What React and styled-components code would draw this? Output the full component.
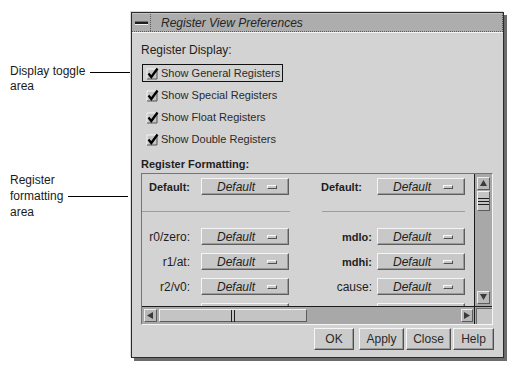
import styled, { createGlobalStyle } from "styled-components";

const GlobalStyle = createGlobalStyle`
  body {
    margin: 0;
    background: #ffffff;
    font-family: "Liberation Sans", Arial, sans-serif;
    font-size: 12px;
    color: #1a1a1a;
  }
`;

const Page = styled.div`
  display: flex;
  width: 517px;
  height: 371px;
  overflow: hidden;
`;

const Notes = styled.div`
  width: 121px;
  padding-left: 10px;
  flex-shrink: 0;
`;

const Note = styled.div`
  margin-top: ${(p) => p.$gap}px;
  line-height: ${(p) => p.$lh}px;
`;

const NoteLine = styled.div`
  display: flex;
  align-items: center;
  white-space: nowrap;
`;

const Leader = styled.span`
  flex: 1;
  height: 1px;
  background: #000;
  margin: 1px ${(p) => p.$end}px 0 5px;
`;

const Window = styled.div`
  margin-top: 12px;
  width: 373px;
  height: 346px;
  box-sizing: border-box;
  border: 1px solid #2b2b2b;
  background: #d3d3d3;
  box-shadow: -1px -1px 0 #dcdcdc, 3px 3px 0 #6c6c6c;
  display: flex;
  flex-direction: column;
  flex-shrink: 0;
`;

const TitleBar = styled.div`
  display: flex;
  align-items: center;
  height: 17px;
  background: #adadad;
  border-bottom: 1px dotted #5a5a5a;
  border-right: 1px dotted #5a5a5a;
  border-top: 1px solid #c4c4c4;
`;

const MenuButton = styled.div`
  width: 18px;
  height: 17px;
  border-right: 1px dotted #5a5a5a;
  display: flex;
  align-items: center;
  justify-content: center;
  span {
    width: 13px;
    height: 2px;
    background: #1e1e1e;
    border-bottom: 1px solid #f2f2f2;
    border-top: 1px solid #6e6e6e;
  }
`;

const Title = styled.div`
  margin-left: 10px;
  font-style: italic;
  color: #262626;
`;

const Body = styled.div`
  flex: 1;
  border-top: 1px solid #f4f4f4;
  padding: 0 9px;
  display: flex;
  flex-direction: column;
`;

const Heading = styled.div`
  line-height: 14px;
  margin-top: ${(p) => p.$gap}px;
  font-size: ${(p) => (p.$bold ? 11 : 12)}px;
  font-weight: ${(p) => (p.$bold ? 700 : 400)};
  color: #1e1e1e;
`;

const CheckList = styled.div`
  margin-top: 5px;
  display: flex;
  flex-direction: column;
`;

const CheckRow = styled.div`
  height: 22px;
  display: flex;
  align-items: center;
`;

const Focus = styled.div`
  display: flex;
  align-items: center;
  height: 16px;
  margin-left: 1px;
  padding: 0 2px 0 3px;
  border: 1px solid ${(p) => (p.$on ? "#111" : "transparent")};
  gap: 2px;
  font-size: 11px;
  color: #2a2a2a;
`;

const CheckMark = () => (
  <svg width="13" height="13" viewBox="0 0 13 13">
    <rect x="1" y="2" width="10" height="10" fill="#c4c4c4" />
    <path d="M1 12 V2 H11" stroke="#f4f4f4" strokeWidth="1" fill="none" />
    <path d="M1 12 H11 V2" stroke="#555" strokeWidth="1" fill="none" />
    <path d="M2.5 6.5 L5.3 10 L11.5 1.5" stroke="#000" strokeWidth="2.3" fill="none" />
  </svg>
);

const ScrollFrame = styled.div`
  margin-top: 2px;
  width: 352px;
  height: 152px;
  box-sizing: border-box;
  border: 1px solid;
  border-color: #747474 #f6f6f6 #f6f6f6 #747474;
  display: grid;
  grid-template-columns: 332px 18px;
  grid-template-rows: 132px 18px;
`;

const Viewport = styled.div`
  overflow: hidden;
  display: flex;
  flex-direction: column;
`;

const FieldRow = styled.div`
  height: 25px;
  flex-shrink: 0;
  display: flex;
  align-items: center;
`;

const FieldLabel = styled.div`
  width: ${(p) => p.$w}px;
  box-sizing: border-box;
  padding-right: ${(p) => p.$pad}px;
  text-align: right;
  font-size: ${(p) => (p.$bold ? 11 : 12)}px;
  font-weight: ${(p) => (p.$bold ? 700 : 400)};
  color: #1e1e1e;
  white-space: nowrap;
`;

const OptionMenu = styled.div`
  width: 88px;
  height: 17px;
  box-sizing: border-box;
  margin-left: ${(p) => p.$gap}px;
  background: #c8c8c8;
  border: 1px solid;
  border-color: #f4f4f4 #5e5e5e #5e5e5e #f4f4f4;
  box-shadow: inset -1px -1px 0 #9a9a9a;
  display: flex;
  align-items: center;
  justify-content: space-between;
  padding: 0 11px 0 15px;
  font-style: italic;
  color: #1e1e1e;
`;

const Indicator = styled.span`
  width: 10px;
  height: 4px;
  box-sizing: border-box;
  background: #c8c8c8;
  border: 1px solid;
  border-color: #fafafa #505050 #505050 #fafafa;
`;

const SeparatorRow = styled.div`
  height: 25px;
  flex-shrink: 0;
  display: flex;
  align-items: center;
`;

const Rule = styled.div`
  width: ${(p) => p.$w}px;
  margin-left: ${(p) => p.$gap}px;
  border-top: 1px solid #9c9c9c;
`;

const VScroll = styled.div`
  border-left: 1px solid #1c1c1c;
  background: #a8a8a8;
  padding: 3px 2px 2px 2px;
  display: flex;
  flex-direction: column;
  align-items: center;
`;

const HScroll = styled.div`
  border-top: 1px solid #1c1c1c;
  background: #a8a8a8;
  padding: 2px 1px 2px 2px;
  display: flex;
  align-items: center;
`;

const Arrow = styled.div`
  width: ${(p) => p.$w}px;
  height: ${(p) => p.$h}px;
  box-sizing: border-box;
  background: #b8b8b8;
  border: 1px solid;
  border-color: #ededed #5c5c5c #5c5c5c #ededed;
  display: flex;
  align-items: center;
  justify-content: center;
  flex-shrink: 0;
`;

const Thumb = styled.div`
  box-sizing: border-box;
  background: #c4c4c4;
  border: 1px solid;
  border-color: #f2f2f2 #5c5c5c #5c5c5c #f2f2f2;
  display: flex;
  align-items: center;
  justify-content: center;
  flex-shrink: 0;
  width: ${(p) => p.$w};
  height: ${(p) => p.$h};
  margin: ${(p) => p.$m};
`;

const Grip = styled.div`
  display: flex;
  flex-direction: ${(p) => (p.$vertical ? "column" : "row")};
  gap: 2px;
  span {
    background: #1e1e1e;
    ${(p) => (p.$vertical ? "width: 11px; height: 1px;" : "width: 1px; height: 12px;")}
  }
`;

const Trough = styled.div`
  flex: 1;
`;

const Corner = styled.div`
  border-top: 1px solid #1c1c1c;
  border-left: 1px solid #1c1c1c;
  background: #a8a8a8;
  padding: 1px 0 0 1px;
  div {
    width: 100%;
    height: 100%;
    box-sizing: border-box;
    background: #c4c4c4;
    border-left: 1px solid #6a6a6a;
    border-top: 1px solid #6a6a6a;
  }
`;

const ButtonRow = styled.div`
  margin-top: 3px;
  display: flex;
  justify-content: flex-end;
  gap: 2px;
`;

const PushButton = styled.div`
  width: ${(p) => p.$w}px;
  height: 22px;
  box-sizing: border-box;
  margin-right: ${(p) => p.$after || 0}px;
  background: #cbcbcb;
  border: 1px solid;
  border-color: #f6f6f6 #4e4e4e #4e4e4e #f6f6f6;
  box-shadow: inset -1px -1px 0 #9a9a9a;
  display: flex;
  align-items: center;
  justify-content: center;
  color: #2a2a2a;
`;

const Tri = ({ dir }) => {
  const pts = {
    up: "1,7 4.5,1 8,7",
    down: "1,1 4.5,7 8,1",
    left: "7,1 1,4.5 7,8",
    right: "1,1 7,4.5 1,8",
  }[dir];
  return (
    <svg width="9" height="9" viewBox="0 0 9 9">
      <polygon points={pts} fill="#3a3a3a" />
    </svg>
  );
};

const checks = [
  { label: "Show General Registers", focus: true },
  { label: "Show Special Registers" },
  { label: "Show Float Registers" },
  { label: "Show Double Registers" },
];

const rows = [
  { l: "r0/zero:", r: "mdlo:", rb: true },
  { l: "r1/at:", r: "mdhi:", rb: true },
  { l: "r2/v0:", r: "cause:" },
];

function Field({ label, bold, w, pad, gap, hidden }) {
  return (
    <>
      <FieldLabel $w={w} $pad={pad} $bold={bold}>
        {label}
      </FieldLabel>
      <OptionMenu $gap={gap}>
        {!hidden && <span>Default</span>}
        {!hidden && <Indicator />}
      </OptionMenu>
    </>
  );
}

export default function App() {
  return (
    <>
      <GlobalStyle />
      <Page>
        <Notes>
          <Note $gap={64} $lh={15}>
            <NoteLine>
              Display toggle <Leader $end={1} />
            </NoteLine>
            <NoteLine>area</NoteLine>
          </Note>
          <Note $gap={78} $lh={16}>
            <NoteLine>Register</NoteLine>
            <NoteLine>
              formatting <Leader $end={3} />
            </NoteLine>
            <NoteLine>area</NoteLine>
          </Note>
        </Notes>

        <Window>
          <TitleBar>
            <MenuButton>
              <span />
            </MenuButton>
            <Title>Register View Preferences</Title>
          </TitleBar>

          <Body>
            <Heading $gap={10}>Register Display:</Heading>
            <CheckList>
              {checks.map((c) => (
                <CheckRow key={c.label}>
                  <Focus $on={c.focus}>
                    <CheckMark />
                    {c.label}
                  </Focus>
                </CheckRow>
              ))}
            </CheckList>

            <Heading $gap={7} $bold>
              Register Formatting:
            </Heading>
            <ScrollFrame>
              <Viewport>
                <FieldRow>
                  <Field label="Default:" bold w={48} pad={0} gap={11} />
                  <Field label="Default:" bold w={85} pad={12} gap={3} />
                </FieldRow>
                <SeparatorRow>
                  <Rule $w={148} $gap={0} />
                  <Rule $w={143} $gap={32} />
                </SeparatorRow>
                {rows.map((r) => (
                  <FieldRow key={r.l}>
                    <Field label={r.l} w={49} pad={1} gap={10} />
                    <Field label={r.r} bold={r.rb} w={84} pad={1} gap={4} />
                  </FieldRow>
                ))}
                <FieldRow>
                  <Field label="" w={49} pad={1} gap={10} hidden />
                  <Field label="" w={84} pad={1} gap={4} hidden />
                </FieldRow>
              </Viewport>

              <VScroll>
                <Arrow $w={13} $h={13}>
                  <Tri dir="up" />
                </Arrow>
                <Thumb $w="13px" $h="20px" $m="1px 0 0 0">
                  <Grip $vertical>
                    <span />
                    <span />
                    <span />
                  </Grip>
                </Thumb>
                <Trough />
                <Arrow $w={13} $h={13}>
                  <Tri dir="down" />
                </Arrow>
              </VScroll>

              <HScroll>
                <Arrow $w={13} $h={13}>
                  <Tri dir="left" />
                </Arrow>
                <Thumb $w="148px" $h="13px" $m="0 0 0 2px">
                  <Grip>
                    <span />
                    <span />
                  </Grip>
                </Thumb>
                <Trough />
                <Arrow $w={12} $h={13}>
                  <Tri dir="right" />
                </Arrow>
              </HScroll>

              <Corner>
                <div />
              </Corner>
            </ScrollFrame>

            <ButtonRow>
              <PushButton $w={40} $after={3}>
                OK
              </PushButton>
              <PushButton $w={45}>Apply</PushButton>
              <PushButton $w={45}>Close</PushButton>
              <PushButton $w={41}>Help</PushButton>
            </ButtonRow>
          </Body>
        </Window>
      </Page>
    </>
  );
}
